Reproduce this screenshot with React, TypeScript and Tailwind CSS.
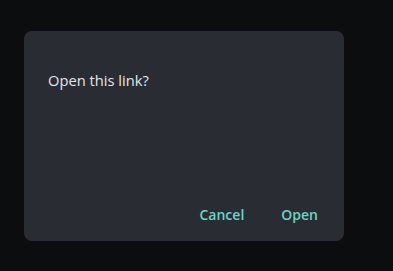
export default function App() {
  return (
    <div
      className="min-h-[271px] w-full bg-[#0c0d0f] pt-[31px] pl-[24px]"
      style={{ fontFamily: '"Open Sans", "Noto Sans", sans-serif' }}
    >
      <div className="flex h-[210px] w-[320px] flex-col rounded-[8px] bg-[#292d33]">
        <div className="flex-1 px-[24px] pt-[39px]">
          <p className="text-[14.7px] leading-[20px] text-[#e3e6ea]">Open this link?</p>
        </div>
        <div className="flex justify-end gap-[13px] pr-[14px] pb-[9px]">
          <button className="h-[36px] px-[12px] text-[14px] font-semibold text-[#6ed3c5]">
            Cancel
          </button>
          <button className="h-[36px] px-[12px] text-[14px] font-semibold text-[#6ed3c5]">
            Open
          </button>
        </div>
      </div>
    </div>
  );
}
